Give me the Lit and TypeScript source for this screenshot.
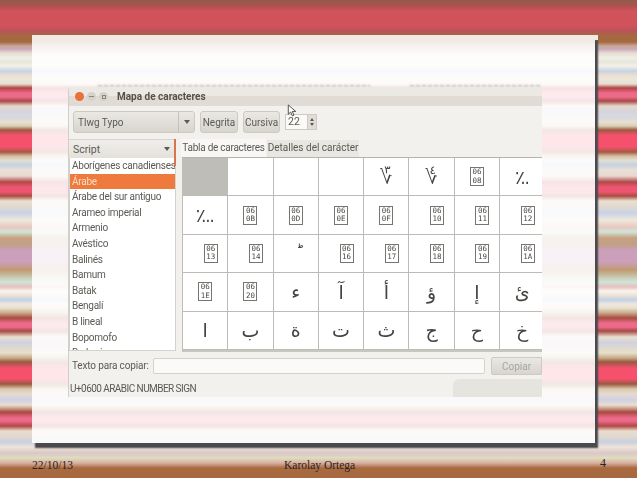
import { LitElement, html, css, unsafeCSS } from 'lit';
import { customElement } from 'lit/decorators.js';

// y position (px) and colour of the slide's horizontal stripes
const STRIPES: [number, string][] = [
  [0, '#8f5b4d'], [6, '#b0504f'], [11, '#d0525a'], [26, '#d0525a'], [31, '#b8545a'], [36, '#a5693f'],
  [42, '#a5693f'], [46, '#c9a89a'], [49, '#cca8bb'], [53, '#e5ddd0'], [58, '#f0efe6'], [62, '#e6e6da'],
  [66, '#f5f0e8'], [71, '#c5d3e5'], [76, '#f0e0d0'], [80, '#e8e6da'], [84, '#e8ddd0'], [88, '#b04445'],
  [93, '#ee6a8a'], [97, '#ee6a8a'], [101, '#a84845'], [106, '#e4d8cc'], [112, '#d5d5de'], [118, '#d8d8e0'],
  [122, '#e8dfd0'], [126, '#d8d0b8'], [130, '#9c5a40'], [135, '#f5506c'], [147, '#f5506c'], [152, '#a05c40'],
  [156, '#d8b8a0'], [160, '#e0e0d0'], [165, '#c8d0e0'], [170, '#e8e0d4'], [176, '#e8d8d0'], [182, '#b04848'],
  [187, '#ee5570'], [192, '#ee5570'], [196, '#a84c40'], [201, '#e8e0d0'], [207, '#e0d8d0'], [213, '#c8d3e6'],
  [220, '#efe8dc'], [227, '#e8c8c0'], [232, '#d0e4d8'], [238, '#c8a080'], [245, '#c0a088'], [250, '#cca0bb'],
  [262, '#cca0bb'], [270, '#c09a70'], [277, '#c8c8b0'], [282, '#d0e4d8'], [287, '#e8c0c0'], [291, '#f8f4ee'],
  [295, '#efe4d4'], [300, '#c0d0e6'], [304, '#efe8dc'], [308, '#e8e0d0'], [313, '#c8a888'], [318, '#a84c40'],
  [323, '#ee6a8a'], [327, '#ee6a8a'], [331, '#a84845'], [337, '#e8dfd0'], [343, '#d0d0e0'], [348, '#e0d8d0'],
  [353, '#e4e0c8'], [358, '#c8a888'], [362, '#985a40'], [368, '#f5506c'], [379, '#f5506c'], [384, '#985a40'],
  [389, '#dcc8b0'], [394, '#e4dcd0'], [400, '#d0d0e4'], [405, '#e8dfcf'], [409, '#c89080'], [412, '#a84840'],
  [418, '#ee6a8a'], [421, '#ee6a8a'], [426, '#b04845'], [431, '#e8dccc'], [437, '#e0d8d0'], [442, '#c8cfe0'],
  [447, '#f0e4d8'], [453, '#d8c8c8'], [458, '#e0dcc0'], [463, '#d8b0a0'], [468, '#a86a40'], [478, '#a8683f'],
];
const stripes = unsafeCSS(
  `linear-gradient(180deg, ${STRIPES.map(([y, c]) => `${c} ${y}px`).join(', ')})`
);

const SCRIPTS = [
  'Aborígenes canadienses', 'Árabe', 'Árabe del sur antiguo', 'Arameo imperial', 'Armenio', 'Avéstico',
  'Balinés', 'Bamum', 'Batak', 'Bengalí', 'B lineal', 'Bopomofo', 'Brahmi',
];

// '#xx' draws a missing-glyph hex box, '>' moves the content to the right of its cell
const CELLS = [
  '!', '', '', '', '\u0606', '\u0607', '#08', '\u0609',
  '\u060A', '#0B', '#0D', '#0E', '#0F', '>#10', '>#11', '>#12',
  '>#13', '>#14', '\u0615', '>#16', '>#17', '>#18', '>#19', '>#1A',
  '#1E', '#20', 'ء', 'آ', 'أ', 'ؤ', 'إ', 'ئ',
  'ا', 'ب', 'ة', 'ت', 'ث', 'ج', 'ح', 'خ',
];

@customElement('app-root')
export class AppRoot extends LitElement {
  static styles = css`
    :host {
      display: block;
      width: 638px;
      height: 479px;
      background: #fff;
      overflow: hidden;
    }
    .stage {
      position: relative;
      width: 637px;
      height: 478px;
      padding-top: 35px;
      box-sizing: border-box;
      background: ${stripes};
    }
    .slide {
      position: relative;
      width: 563px;
      height: 408px;
      margin-left: 32px;
      padding: 49px 0 0 36px;
      box-sizing: border-box;
      background: rgba(255, 255, 255, 0.86);
      box-shadow: 3px 5px 1.5px #4a4a4e;
    }
    .slide::before {
      content: '';
      position: absolute;
      top: 0;
      right: -3px;
      width: 3px;
      height: 5px;
      background: rgba(255, 255, 255, 0.86);
    }
    .ghost {
      display: flex;
      height: 3px;
      gap: 40px;
      padding-left: 30px;
      filter: blur(0.8px);
    }
    .ghost span {
      height: 2px;
      margin-top: 1px;
      background: repeating-linear-gradient(90deg, #c4c1ba 0 4px, transparent 4px 6px);
    }
    .ghost .a { width: 272px; }
    .ghost .b { width: 130px; }

    .window {
      width: 474px;
      height: 310px;
      display: flex;
      flex-direction: column;
      box-sizing: border-box;
      border-left: 1px solid #d0cec8;
      border-radius: 4px 0 0 0;
      background: #f2f1ee;
      overflow: hidden;
      color: #5c5a55;
      font: 10px Roboto, sans-serif;
      white-space: nowrap;
      filter: blur(0.4px);
    }
    .titlebar {
      height: 19px;
      flex: none;
      display: flex;
      align-items: center;
      padding-left: 6px;
      background: linear-gradient(180deg, #ece9e4 0 50%, #e0dcd5 50%);
    }
    .dot {
      width: 9px;
      height: 9px;
      margin-right: 3px;
      border-radius: 50%;
      display: flex;
      align-items: center;
      justify-content: center;
      background: #d5d2cc;
    }
    .dot.close { background: #e8703c; }
    .dot i { display: block; background: #8a8880; }
    .dot.min i { width: 5px; height: 1px; }
    .dot.max i { width: 4px; height: 4px; background: none; border: 1px solid #8a8880; box-sizing: border-box; }
    .title {
      margin-left: 6px;
      font-weight: 700;
      color: #55504a;
    }
    .toolbar {
      height: 33px;
      flex: none;
      display: flex;
      align-items: flex-start;
      gap: 5px;
      padding: 5px 0 0 4px;
      box-sizing: border-box;
    }
    .btn {
      height: 22px;
      display: flex;
      align-items: center;
      justify-content: center;
      box-sizing: border-box;
      border: 1px solid #cdcac3;
      border-radius: 3px;
      background: linear-gradient(180deg, #eae8e3, #d8d5cf);
    }
    .combo { width: 122px; justify-content: flex-start; padding-left: 4px; }
    .combo .label { flex: 1; }
    .combo .arrow {
      width: 15px;
      height: 100%;
      display: flex;
      align-items: center;
      justify-content: center;
      border-left: 1px solid #c4c1ba;
    }
    .tri {
      width: 0;
      height: 0;
      border-left: 3.5px solid transparent;
      border-right: 3.5px solid transparent;
      border-top: 4px solid #5c5a55;
    }
    .negrita { width: 38px; }
    .cursiva { width: 37px; }
    .spin {
      width: 32px;
      height: 16px;
      margin-top: 3px;
      display: flex;
      box-sizing: border-box;
      border: 1px solid #cdcac3;
      background: #fbfaf8;
      font-size: 10.5px;
      line-height: 14px;
      padding-left: 2px;
    }
    .spin .num { flex: 1; }
    .spin .step {
      width: 8px;
      display: flex;
      flex-direction: column;
      align-items: center;
      justify-content: center;
      gap: 2px;
      background: #e0ddd7;
      border-left: 1px solid #cdcac3;
    }
    .spin .up, .spin .down {
      width: 0;
      height: 0;
      border-left: 2.5px solid transparent;
      border-right: 2.5px solid transparent;
    }
    .spin .up { border-bottom: 3px solid #5c5a55; }
    .spin .down { border-top: 3px solid #5c5a55; }

    .body {
      height: 212px;
      flex: none;
      display: flex;
      gap: 5px;
    }
    .side {
      position: relative;
      width: 107px;
      flex: none;
      display: flex;
      flex-direction: column;
    }
    .side .head {
      height: 19px;
      width: 105px;
      flex: none;
      display: flex;
      align-items: center;
      justify-content: space-between;
      padding: 0 4px;
      box-sizing: border-box;
      background: linear-gradient(180deg, #f0eeea, #e4e1db);
      border-top: 1px solid #d6d3cd;
      font-size: 10.5px;
    }
    .side .thumb {
      position: absolute;
      top: 0;
      right: 0;
      width: 2px;
      height: 27px;
      background: #d9744f;
    }
    .list {
      flex: 1;
      overflow: hidden;
      background: #fff;
      border: 1px solid #d4d2cc;
      border-top: 0;
      box-sizing: border-box;
    }
    .row {
      height: 15.6px;
      line-height: 15.6px;
      padding-left: 2px;
      letter-spacing: -0.25px;
    }
    .row.sel {
      background: #ef7a3e;
      color: #f9dcc6;
    }
    .main {
      flex: 1;
      min-width: 0;
      display: flex;
      flex-direction: column;
    }
    .tabs {
      height: 18px;
      flex: none;
      display: flex;
      gap: 1px;
    }
    .tab {
      width: 85px;
      height: 18px;
      line-height: 17px;
      text-align: center;
      background: #f8f7f5;
      letter-spacing: -0.25px;
    }
    .tab + .tab {
      width: 92px;
      height: 17px;
      margin-top: 1px;
      line-height: 16px;
      letter-spacing: 0;
      background: #e9e7e2;
    }
    .grid {
      margin-left: 1px;
      display: grid;
      grid-template-columns: repeat(8, 45.3px);
      grid-auto-rows: 38.4px;
      width: 362.4px;
      background: #fff;
      border-top: 1px solid #b5b3ad;
      border-left: 1px solid #c0bdb7;
      border-bottom: 2px solid #c8c6c0;
      color: #45433f;
    }
    .cell {
      display: flex;
      align-items: center;
      justify-content: center;
      box-sizing: border-box;
      border-right: 1px solid #bdbbb5;
      border-bottom: 1px solid #bdbbb5;
      font: 19px 'DejaVu Sans', sans-serif;
    }
    .cell.cursor { background: #bebdb8; }
    .cell.shift { padding-left: 11px; }
    .hex {
      width: 14px;
      height: 19px;
      box-sizing: border-box;
      border: 1px solid #77756f;
      font: 7.5px/8.5px 'DejaVu Sans Mono', monospace;
      text-align: center;
      color: #4a4843;
    }
    .copy {
      height: 28px;
      flex: none;
      display: flex;
      align-items: flex-start;
      padding: 6px 0 0 3px;
      box-sizing: border-box;
    }
    .copy .lbl { width: 81px; line-height: 18px; flex: none; letter-spacing: -0.15px; }
    .copy .input {
      width: 332px;
      height: 16px;
      margin-top: 1px;
      flex: none;
      box-sizing: border-box;
      border: 1px solid #d6d3cd;
      border-radius: 2px;
      background: #fbfaf8;
    }
    .copy .copiar {
      width: 51px;
      height: 18px;
      margin-left: 6px;
      flex: none;
      color: #a8a6a0;
      border-radius: 2px 0 0 2px;
    }
    .status {
      flex: 1;
      display: flex;
      justify-content: space-between;
      padding-left: 1px;
      line-height: 20px;
      letter-spacing: -0.55px;
    }
    .status .grip {
      width: 89px;
      border-radius: 6px 0 0 0;
      background: #e6e4de;
    }

    .cursor-arrow {
      position: absolute;
      left: 287px;
      top: 104px;
    }
    .footer {
      display: grid;
      grid-template-columns: 252px 316px auto;
      margin-left: 32px;
      padding-top: 16px;
      font: 11.5px 'Liberation Serif', serif;
      color: #2a2320;
    }
    .footer .page { margin-top: -3px; font-size: 12px; }
  `;

  private renderCell(raw: string) {
    if (raw === '!') return html`<div class="cell cursor"></div>`;
    if (!raw) return html`<div class="cell"></div>`;
    const shift = raw.startsWith('>');
    const v = shift ? raw.slice(1) : raw;
    return html`<div class="cell ${shift ? 'shift' : ''}">
      ${v.startsWith('#')
        ? html`<div class="hex">06<br />${v.slice(1)}</div>`
        : html`<span>${v}</span>`}
    </div>`;
  }

  render() {
    return html`
      <div class="stage">
        <div class="slide">
          <div class="ghost"><span class="a"></span><span class="b"></span></div>
          <div class="window">
            <div class="titlebar">
              <div class="dot close"></div>
              <div class="dot min"><i></i></div>
              <div class="dot max"><i></i></div>
              <div class="title">Mapa de caracteres</div>
            </div>
            <div class="toolbar">
              <div class="btn combo">
                <span class="label">Tlwg Typo</span>
                <span class="arrow"><span class="tri"></span></span>
              </div>
              <div class="btn negrita">Negrita</div>
              <div class="btn cursiva">Cursiva</div>
              <div class="spin">
                <span class="num">22</span>
                <span class="step"><span class="up"></span><span class="down"></span></span>
              </div>
            </div>
            <div class="body">
              <div class="side">
                <div class="head">Script <span class="tri"></span></div>
                <div class="thumb"></div>
                <div class="list">
                  ${SCRIPTS.map((s, i) => html`<div class="row ${i === 1 ? 'sel' : ''}">${s}</div>`)}
                </div>
              </div>
              <div class="main">
                <div class="tabs">
                  <div class="tab">Tabla de caracteres</div>
                  <div class="tab">Detalles del carácter</div>
                </div>
                <div class="grid">${CELLS.map((c) => this.renderCell(c))}</div>
              </div>
            </div>
            <div class="copy">
              <span class="lbl">Texto para copiar:</span>
              <div class="input"></div>
              <div class="btn copiar">Copiar</div>
            </div>
            <div class="status">
              <span>U+0600 ARABIC NUMBER SIGN</span>
              <div class="grip"></div>
            </div>
          </div>
        </div>
        <svg class="cursor-arrow" width="10" height="13" viewBox="0 0 10 14">
          <path d="M1 1v10l2.6-2.4 1.8 4.2 1.7-.8-1.8-4H9z" fill="#fff" stroke="#45474c" stroke-width="1" />
        </svg>
        <div class="footer">
          <span>22/10/13</span>
          <span>Karolay Ortega</span>
          <span class="page">4</span>
        </div>
      </div>
    `;
  }
}
